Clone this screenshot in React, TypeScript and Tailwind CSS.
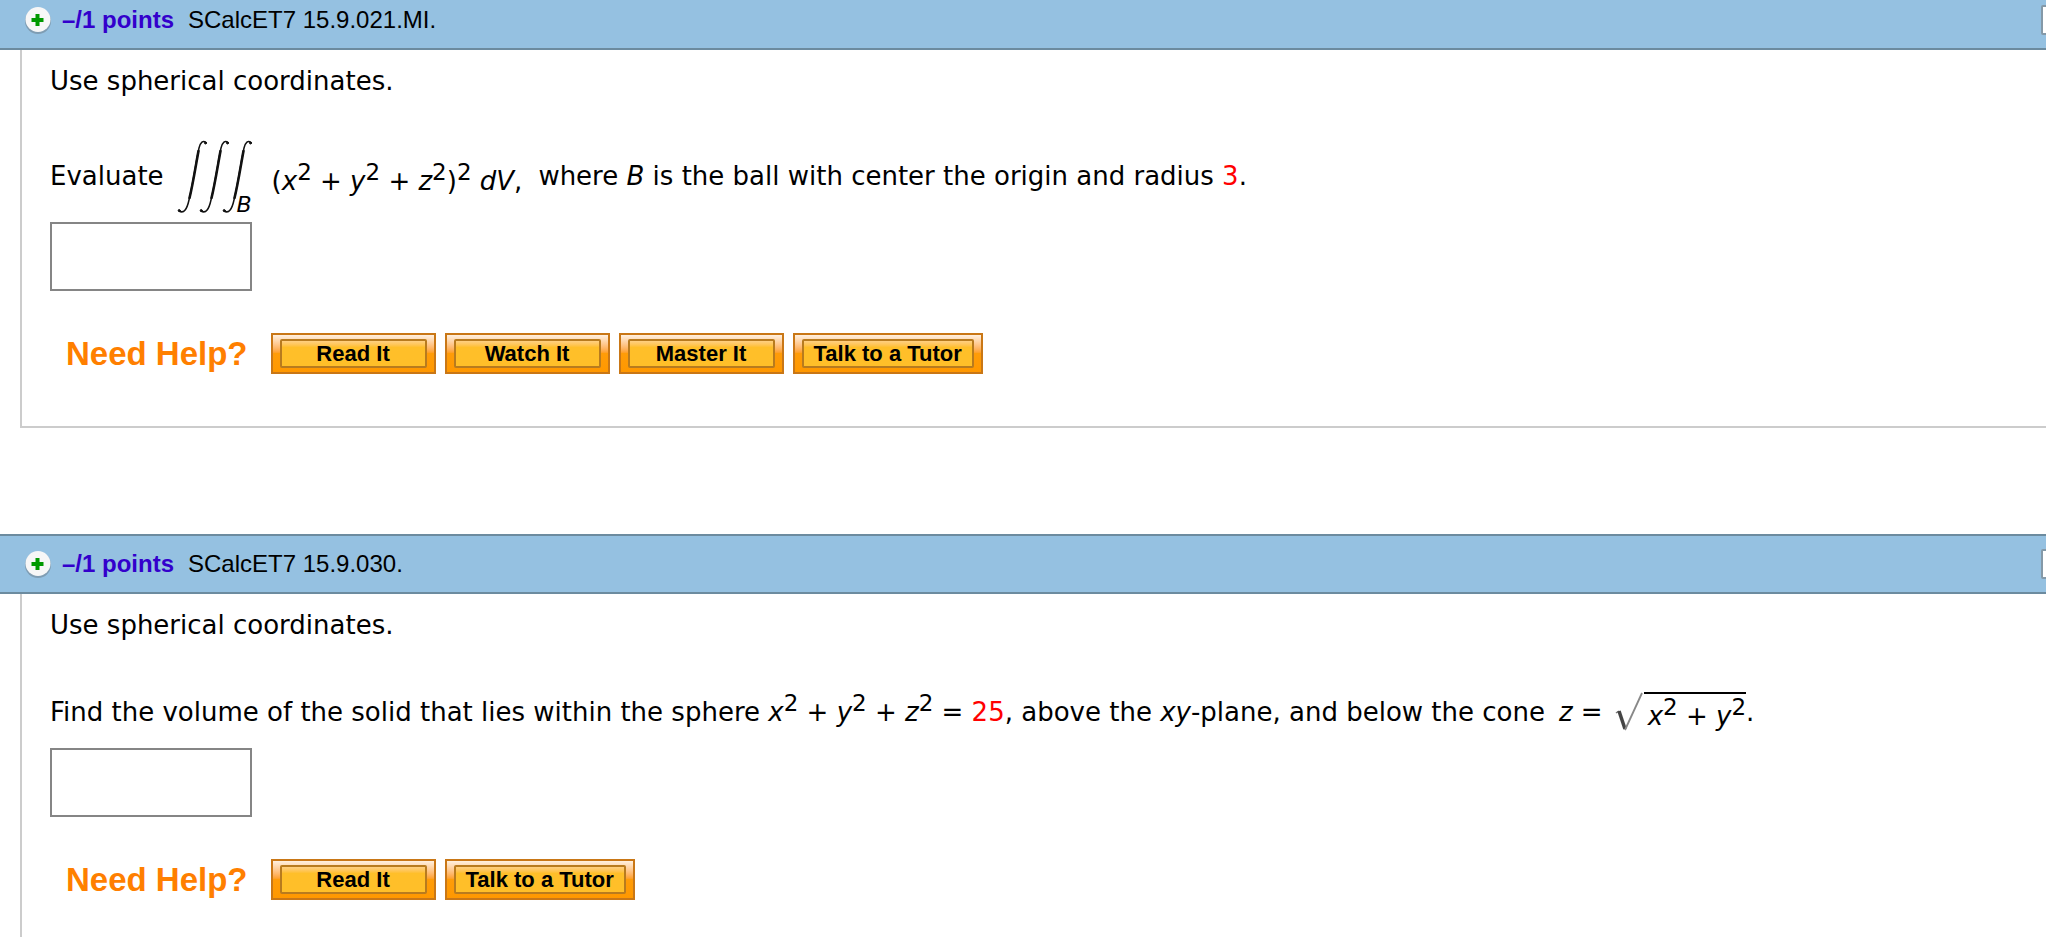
import type { ReactNode } from "react";

const questions = [
  {
    id: "q21",
    name: "SCalcET7 15.9.021.MI.",
    help: ["Read It", "Watch It", "Master It", "Talk to a Tutor"],
    body: <TripleIntegral />,
  },
  {
    id: "q30",
    name: "SCalcET7 15.9.030.",
    help: ["Read It", "Talk to a Tutor"],
    body: <ConeVolume />,
  },
];

function Sup({ children }: { children: ReactNode }) {
  return <sup className="relative -top-2.5 align-baseline text-[23px] leading-none">{children}</sup>;
}

function TripleIntegral() {
  return (
    <div className="mt-10 flex items-center whitespace-nowrap">
      <span>Evaluate</span>
      <div className="relative ml-3">
        <svg width="80" height="78" viewBox="0 1 80 78" fill="none" stroke="#111" strokeLinecap="round">
          {[0, 22, 45].map((x) => (
            <g key={x} transform={`translate(${x} 0)`}>
              <path d="M30 6.5C27 4 24.500 6 23 12C20 26 16.500 50 13 64C11 73 8 78 3 75" strokeWidth="1.500" />
              <path d="M22.500 15C20 28 17 48 13.500 62" strokeWidth="2.600" />
              <circle cx="29.500" cy="7" r="1" fill="#111" />
              <circle cx="3.200" cy="74.500" r="1" fill="#111" />
            </g>
          ))}
        </svg>
        <i className="absolute right-1 bottom-0 text-[22px] leading-5">B</i>
      </div>
      <span className="ml-4 pt-2.5">
        (<i>x</i><Sup>2</Sup> + <i>y</i><Sup>2</Sup> + <i>z</i><Sup>2</Sup>)<Sup>2</Sup> <i>dV</i>,
      </span>
      <span className="ml-4">
        where <i>B</i> is the ball with center the origin and radius <span className="text-[#ff0000]">3</span>.
      </span>
    </div>
  );
}

function ConeVolume() {
  return (
    <div className="mt-[47px] mb-3 flex h-12 items-center whitespace-nowrap">
      <span>
        Find the volume of the solid that lies within the sphere <i>x</i><Sup>2</Sup> + <i>y</i><Sup>2</Sup> + <i>z</i>
        <Sup>2</Sup> = <span className="text-[#ff0000]">25</span>, above the <i>xy</i>-plane, and below the cone
      </span>
      <span className="ml-3.5">
        <i>z</i> =
      </span>
      <svg className="ml-3" width="29" height="44" viewBox="0 0 29 44" fill="none">
        <path d="M1 23L4 21" stroke="#777" strokeWidth="1.500" />
        <path d="M4 21L10 39" stroke="#444" strokeWidth="3.500" />
        <path d="M10 40L27 3" stroke="#888" strokeWidth="1.800" />
      </svg>
      <span className="border-t-2 border-black pt-1.5 pl-1">
        <i>x</i><Sup>2</Sup> + <i>y</i><Sup>2</Sup>
      </span>
      <span>.</span>
    </div>
  );
}

function HelpButton({ label }: { label: string }) {
  return (
    <button
      type="button"
      className="border-2 border-[#c97716] bg-linear-to-b from-[#fff0df] via-[#ff9c08] via-50% to-[#ff9800] px-[7px] py-1 font-['Liberation_Sans',sans-serif] text-[22px] font-bold"
    >
      <span className="block min-w-[147px] rounded-xs border-2 border-[#b87b1e] bg-linear-to-b from-[#ffcf80] to-[#ffbf29] to-25% px-2.5 leading-[25px]">
        {label}
      </span>
    </button>
  );
}

function QuestionHeader({ name }: { name: string }) {
  return (
    <header className="flex h-[60px] items-center overflow-hidden border-y-2 border-[#6c8b9f] bg-[#95c1e1] pl-6 font-['Liberation_Sans',sans-serif] text-[24px]">
      <button type="button" aria-label="Expand question">
        <svg width="28" height="28" viewBox="0 0 28 28">
          <circle cx="14" cy="15" r="13" fill="#7f9db3" />
          <circle cx="14" cy="13.500" r="12.500" fill="#f7f7f7" />
          <path d="M11.500 8h4v4h4v4h-4v4h-4v-4h-4v-4h4z" fill="#009900" />
        </svg>
      </button>
      <a href="#points" className="ml-2.5 font-bold text-[#3300cc]">
        –/1 points
      </a>
      <span className="ml-3.5">{name}</span>
      <button
        type="button"
        aria-label="Notes"
        className="-mr-6 ml-auto h-[30px] w-[29px] shrink-0 rounded-xs border-2 border-[#8499a8] bg-white"
      />
    </header>
  );
}

export default function App() {
  return (
    <main className="h-screen overflow-hidden bg-white font-['DejaVu_Sans',sans-serif] text-[26px] leading-8 text-black">
      {/* page is scrolled a little past the top of the first header */}
      <div className="-mt-2.5">
        {questions.map((q) => (
          <section key={q.id} className="mb-[106px]">
            <QuestionHeader name={q.name} />
            <div className="ml-5 border-b-2 border-l-2 border-[#cccccc] pt-[15px] pb-[52px] pl-7">
              <p>Use spherical coordinates.</p>
              {q.body}
              <input
                type="text"
                aria-label="Answer"
                className="mt-[7px] block h-[69px] w-[202px] border-2 border-[#858585] bg-white px-2"
              />
              <div className="mt-[42px] flex items-center gap-[9px]">
                <span className="mr-3.5 ml-4 font-['Liberation_Sans',sans-serif] text-[33px] font-bold text-[#ff7f00]">
                  Need Help?
                </span>
                {q.help.map((label) => (
                  <HelpButton key={label} label={label} />
                ))}
              </div>
            </div>
          </section>
        ))}
      </div>
    </main>
  );
}
